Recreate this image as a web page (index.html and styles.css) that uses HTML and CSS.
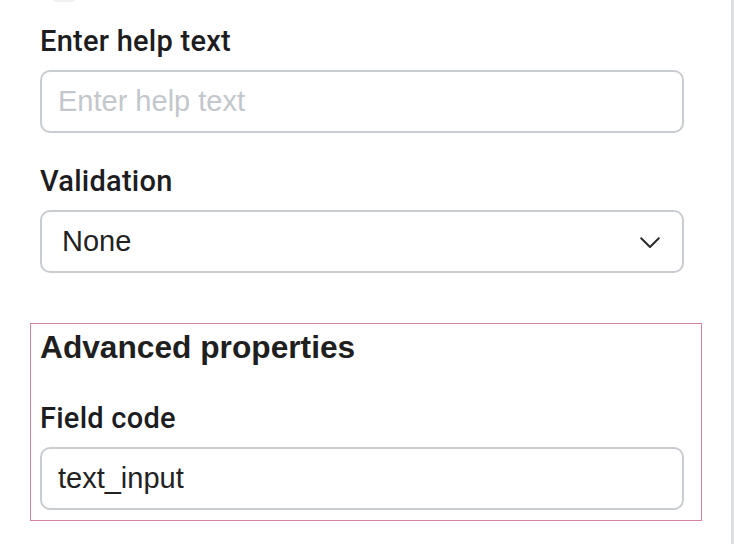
FILE: index.html
```html
<!DOCTYPE html>
<html lang="en">
<head>
<meta charset="utf-8">
<title>Field properties</title>
<link rel="stylesheet" href="styles.css">
</head>
<body>
<div class="page">
  <div class="panel">
    <div class="stub"></div>
    <div class="field">
      <label class="label" for="help">Enter help text</label>
      <input class="input" id="help" type="text" placeholder="Enter help text">
    </div>
    <div class="field">
      <label class="label">Validation</label>
      <div class="select">
        <span class="select-value">None</span>
        <svg class="chevron" width="20" height="12" viewBox="0 0 20 12" aria-hidden="true"><polyline points="1.2,1.2 10,10 18.8,1.2" fill="none" stroke="#2b2b2b" stroke-width="2" stroke-linecap="round" stroke-linejoin="round"/></svg>
      </div>
    </div>
    <section class="advanced">
      <h2 class="advanced-title">Advanced properties</h2>
      <div class="field">
        <label class="label" for="code">Field code</label>
        <input class="input" id="code" type="text" value="text_input">
      </div>
    </section>
  </div>
  <div class="scrollbar"></div>
</div>
</body>
</html>
```

FILE: styles.css
```css
html, body {
  margin: 0;
  padding: 0;
  background: #ffffff;
}

body {
  width: 734px;
  height: 544px;
  overflow: hidden;
  font-family: "Liberation Sans", Arial, sans-serif;
  color: #1f1f1f;
}

.page {
  display: flex;
  height: 544px;
}

.panel {
  flex: 1;
  padding-left: 40px;
}

.scrollbar {
  width: 3px;
  background: #dedfe1;
}

.stub {
  width: 22px;
  height: 2px;
  margin-left: 13px;
  margin-bottom: 22px;
  background: #f0f0f1;
  border-radius: 0 0 3px 3px;
}

.field + .field {
  margin-top: 31px;
}

.label {
  display: block;
  font-family: Roboto, "Liberation Sans", sans-serif;
  font-weight: 500;
  font-size: 29px;
  line-height: 34px;
  letter-spacing: 0.25px;
  color: #1d1d1f;
  margin-bottom: 12px;
}

.input,
.select {
  box-sizing: border-box;
  width: 644px;
  height: 63px;
  border: 2px solid #c9ccd0;
  border-radius: 10px;
  background: #ffffff;
  font-family: "Liberation Sans", Arial, sans-serif;
  font-size: 29px;
  color: #222222;
  padding: 0 16px;
  margin: 0;
  outline: none;
  display: block;
}

.input::placeholder {
  color: #c3c7cc;
  opacity: 1;
}

.select {
  display: flex;
  align-items: center;
  justify-content: space-between;
  padding: 0 22px 0 20px;
}

.select-value {
  line-height: 1;
}

.chevron {
  display: block;
  margin-top: 2px;
}

.advanced {
  box-sizing: border-box;
  width: 672px;
  margin: 50px 0 0 -10px;
  padding: 5px 17px 10px 9px;
  border: 1px solid #d9829f;
}

.advanced-title {
  margin: 0 0 36px 0;
  font-family: "Liberation Sans", Arial, sans-serif;
  font-weight: 700;
  font-size: 31.7px;
  line-height: 36px;
  color: #1f1f1f;
}
```
